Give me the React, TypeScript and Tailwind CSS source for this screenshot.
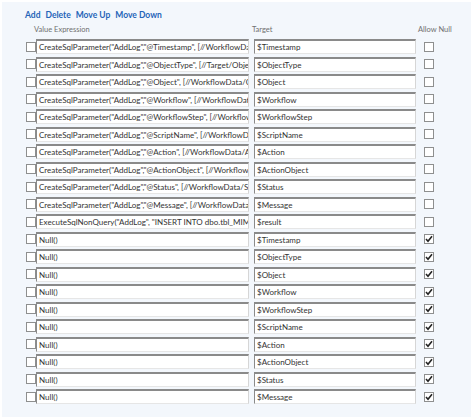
import React from 'react';

type Mapping = {
  expr: string;
  target: string;
  allowNull: boolean;
};

const fields = [
  ['Timestamp', '[//WorkflowData/Timestamp]'],
  ['ObjectType', '[//Target/ObjectType]'],
  ['Object', '[//WorkflowData/Object]'],
  ['Workflow', '[//WorkflowData/Workflow]'],
  ['WorkflowStep', '[//WorkflowData/WorkflowStep]'],
  ['ScriptName', '[//WorkflowData/ScriptName]'],
  ['Action', '[//WorkflowData/Action]'],
  ['ActionObject', '[//WorkflowData/ActionObject]'],
  ['Status', '[//WorkflowData/Status]'],
  ['Message', '[//WorkflowData/Message]'],
];

const rows: Mapping[] = [
  ...fields.map(([name, path]) => ({
    expr: `CreateSqlParameter("AddLog","@${name}", ${path})`,
    target: `$${name}`,
    allowNull: false,
  })),
  {
    expr: 'ExecuteSqlNonQuery("AddLog", "INSERT INTO dbo.tbl_MIMSelfServiceLog")',
    target: '$result',
    allowNull: false,
  },
  ...fields.map(([name]) => ({ expr: 'Null()', target: `$${name}`, allowNull: true })),
];

function Check({ checked }: { checked?: boolean }) {
  return (
    <span className="flex h-[10px] w-[10px] shrink-0 items-center justify-center border border-[#8e8f8f] bg-white">
      {checked && (
        <svg width="8" height="8" viewBox="0 0 8 8">
          <path d="M1 4 L3 6.2 L7 1.2" fill="none" stroke="#222" strokeWidth="1.6" />
        </svg>
      )}
    </span>
  );
}

function Field({ value, width }: { value: string; width: string }) {
  return (
    <div
      className={`${width} h-[15px] shrink-0 overflow-hidden whitespace-nowrap border border-t-2 border-t-[#8a8a8a] border-l-[#8a8a8a] border-r-[#d6d6d6] border-b-[#e6e6e6] bg-white pl-[2px] text-[8px] leading-[12px] text-[#333]`}
    >
      {value}
    </div>
  );
}

export default function App() {
  return (
    <div className="h-[420px] w-[474px] bg-white p-[2px] font-['Lato',sans-serif]">
      <div className="h-[415px] w-[469px] bg-[#f3f7fc]">
        <div className="flex gap-[5px] pl-[23px] pt-[7px] text-[8.5px] font-bold leading-[12px] text-[#2564b8]">
          <span>Add</span>
          <span>Delete</span>
          <span>Move Up</span>
          <span>Move Down</span>
        </div>
        <div className="mt-[3px] flex text-[7.5px] leading-[12px] text-[#707070]">
          <span className="ml-[32px] w-[218px]">Value Expression</span>
          <span className="w-[166px]">Target</span>
          <span>Allow Null</span>
        </div>
        <div className="mt-[2px]">
          {rows.map((row, i) => (
            <div key={i} className="flex h-[17.5px] items-center">
              <div className="ml-[24px]">
                <Check />
              </div>
              <Field value={row.expr} width="w-[213px]" />
              <div className="ml-[5px]">
                <Field value={row.target} width="w-[162px]" />
              </div>
              <div className="ml-[8px]">
                <Check checked={row.allowNull} />
              </div>
            </div>
          ))}
        </div>
      </div>
    </div>
  );
}
